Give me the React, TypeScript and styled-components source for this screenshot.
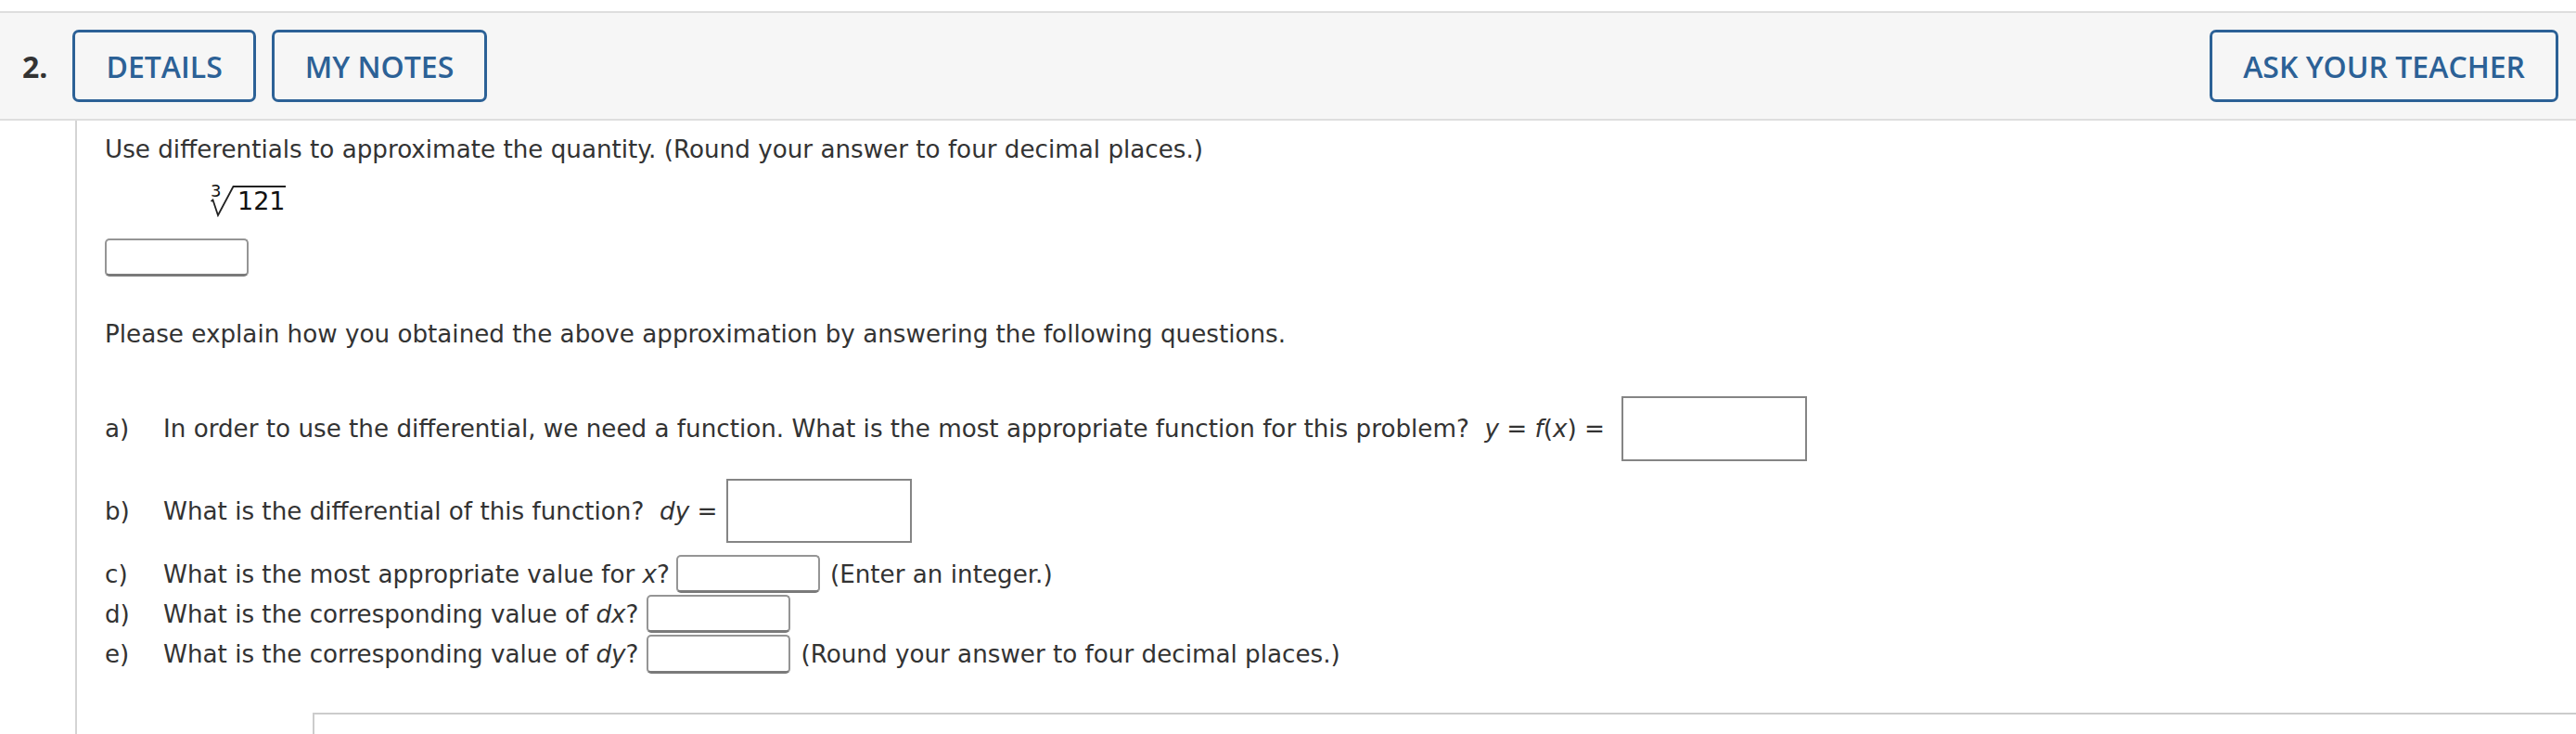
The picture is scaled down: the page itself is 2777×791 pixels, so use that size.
import React from "react";
import styled, { createGlobalStyle } from "styled-components";

const GlobalStyle = createGlobalStyle`
  html, body { margin: 0; padding: 0; background: #ffffff; }
  body {
    font-family: "DejaVu Sans", Verdana, sans-serif;
    color: #333333;
    overflow: hidden;
  }
`;

const Page = styled.div`
  padding-top: 12px;
  width: 2777px;
  height: 791px;
  box-sizing: border-box;
  display: flex;
  flex-direction: column;
`;

const Header = styled.header`
  display: flex;
  align-items: center;
  height: 114px;
  border-top: 2px solid #dedede;
  border-bottom: 2px solid #dedede;
  background: #f6f6f6;
  padding: 0 19px 0 24px;
  font-family: "Open Sans", "Liberation Sans", sans-serif;
`;

const QNumber = styled.span`
  font-size: 32px;
  font-weight: 700;
  color: #333333;
  margin-right: 27px;
`;

const HeaderButton = styled.button<{ $push?: boolean }>`
  font-family: "Open Sans", "Liberation Sans", sans-serif;
  font-size: 32px;
  font-weight: 600;
  color: #2c6196;
  background: transparent;
  border: 3px solid #2c6196;
  border-radius: 7px;
  height: 78px;
  padding: 0 33px;
  margin-right: 17px;
  margin-left: ${(p) => (p.$push ? "auto" : "0")};
  display: flex;
  align-items: center;
  cursor: pointer;
  &:last-child { margin-right: 0; }
`;

const Body = styled.main`
  flex: 1;
  margin-left: 81px;
  border-left: 2px solid #d4d4d4;
  padding-left: 30px;
  display: flex;
  flex-direction: column;
  font-size: 26.2px;
  line-height: 40px;
`;

const Para = styled.p<{ $top: number }>`
  margin: ${(p) => p.$top}px 0 0 0;
  line-height: 40px;
`;

const RadicalRow = styled.div`
  margin-top: 17px;
  height: 40px;
  padding-left: 114px;
  display: flex;
`;

const Radical = styled.span`
  position: relative;
  display: inline-flex;
  align-items: flex-start;
  font-size: 27px;
  color: #111;
`;

const RadIndex = styled.span`
  position: absolute;
  left: 0;
  top: -1px;
  font-size: 18px;
  line-height: 18px;
`;

const RadSign = styled.svg`
  display: block;
  width: 26px;
  height: 36px;
  flex: none;
`;

const Radicand = styled.span`
  margin-top: 2px;
  border-top: 2px solid #222;
  padding: 0 0 0 3px;
  line-height: 30px;
`;

const AnswerBox = styled.input<{ $w: number; $square?: boolean; $h: number }>`
  box-sizing: border-box;
  width: ${(p) => p.$w}px;
  height: ${(p) => p.$h}px;
  border: 2px solid ${(p) => (p.$square ? "#858585" : "#959595")};
  border-bottom-width: ${(p) => (p.$square ? 2 : 3)}px;
  border-bottom-color: ${(p) => (p.$square ? "#858585" : "#7a7a7a")};
  border-radius: ${(p) => (p.$square ? 0 : 5)}px;
  background: #fff;
  padding: 0;
  margin: 0;
  flex: none;
  font: inherit;
`;

const FirstBoxRow = styled.div`
  margin-top: 19px;
  display: flex;
`;

const PartRow = styled.div<{ $top: number; $h: number }>`
  margin-top: ${(p) => p.$top}px;
  height: ${(p) => p.$h}px;
  display: flex;
  align-items: center;
  white-space: pre;
`;

const PartLabel = styled.span`
  width: 63px;
  flex: none;
`;

const Gap = styled.span<{ $w: number }>`
  display: inline-block;
  width: ${(p) => p.$w}px;
  flex: none;
`;

const M = styled.i`
  font-style: italic;
`;

const TrailingBox = styled.div`
  margin-top: 42px;
  margin-left: 224px;
  flex: 1;
  border-top: 2px solid #cccccc;
  border-left: 2px solid #cccccc;
`;

export default function App() {
  return (
    <>
      <GlobalStyle />
      <Page>
        <Header>
          <QNumber>2.</QNumber>
          <HeaderButton>DETAILS</HeaderButton>
          <HeaderButton>MY NOTES</HeaderButton>
          <HeaderButton $push>ASK YOUR TEACHER</HeaderButton>
        </Header>
        <Body>
          <Para $top={11}>
            Use differentials to approximate the quantity. (Round your answer to four decimal places.)
          </Para>
          <RadicalRow>
            <Radical>
              <RadIndex>3</RadIndex>
              <RadSign viewBox="0 0 26 36">
                <polyline
                  points="0.5,19 2.5,17.5 8,34 24.5,3 26,3"
                  fill="none"
                  stroke="#222"
                  strokeWidth="1.8"
                  strokeLinejoin="miter"
                />
              </RadSign>
              <Radicand>121</Radicand>
            </Radical>
          </RadicalRow>
          <FirstBoxRow>
            <AnswerBox $w={155} $h={41} aria-label="answer" />
          </FirstBoxRow>
          <Para $top={42}>
            Please explain how you obtained the above approximation by answering the following questions.
          </Para>
          <PartRow $top={47} $h={70}>
            <PartLabel>a)</PartLabel>
            <span>In order to use the differential, we need a function. What is the most appropriate function for this problem?  </span>
            <M>y</M>
            <span> = </span>
            <M>f</M>
            <span>(</span>
            <M>x</M>
            <span>) =</span>
            <Gap $w={18} />
            <AnswerBox $w={200} $h={70} $square aria-label="f(x)" />
          </PartRow>
          <PartRow $top={19} $h={69}>
            <PartLabel>b)</PartLabel>
            <span>What is the differential of this function?  </span>
            <M>dy</M>
            <span> =</span>
            <Gap $w={10} />
            <AnswerBox $w={200} $h={69} $square aria-label="dy" />
          </PartRow>
          <PartRow $top={13} $h={41}>
            <PartLabel>c)</PartLabel>
            <span>What is the most appropriate value for </span>
            <M>x</M>
            <span>?</span>
            <Gap $w={7} />
            <AnswerBox $w={155} $h={41} aria-label="x" />
            <Gap $w={11} />
            <span>(Enter an integer.)</span>
          </PartRow>
          <PartRow $top={2} $h={41}>
            <PartLabel>d)</PartLabel>
            <span>What is the corresponding value of </span>
            <M>dx</M>
            <span>?</span>
            <Gap $w={9} />
            <AnswerBox $w={155} $h={41} aria-label="dx" />
          </PartRow>
          <PartRow $top={2} $h={42}>
            <PartLabel>e)</PartLabel>
            <span>What is the corresponding value of </span>
            <M>dy</M>
            <span>?</span>
            <Gap $w={9} />
            <AnswerBox $w={155} $h={42} aria-label="dy value" />
            <Gap $w={11} />
            <span>(Round your answer to four decimal places.)</span>
          </PartRow>
          <TrailingBox />
        </Body>
      </Page>
    </>
  );
}
